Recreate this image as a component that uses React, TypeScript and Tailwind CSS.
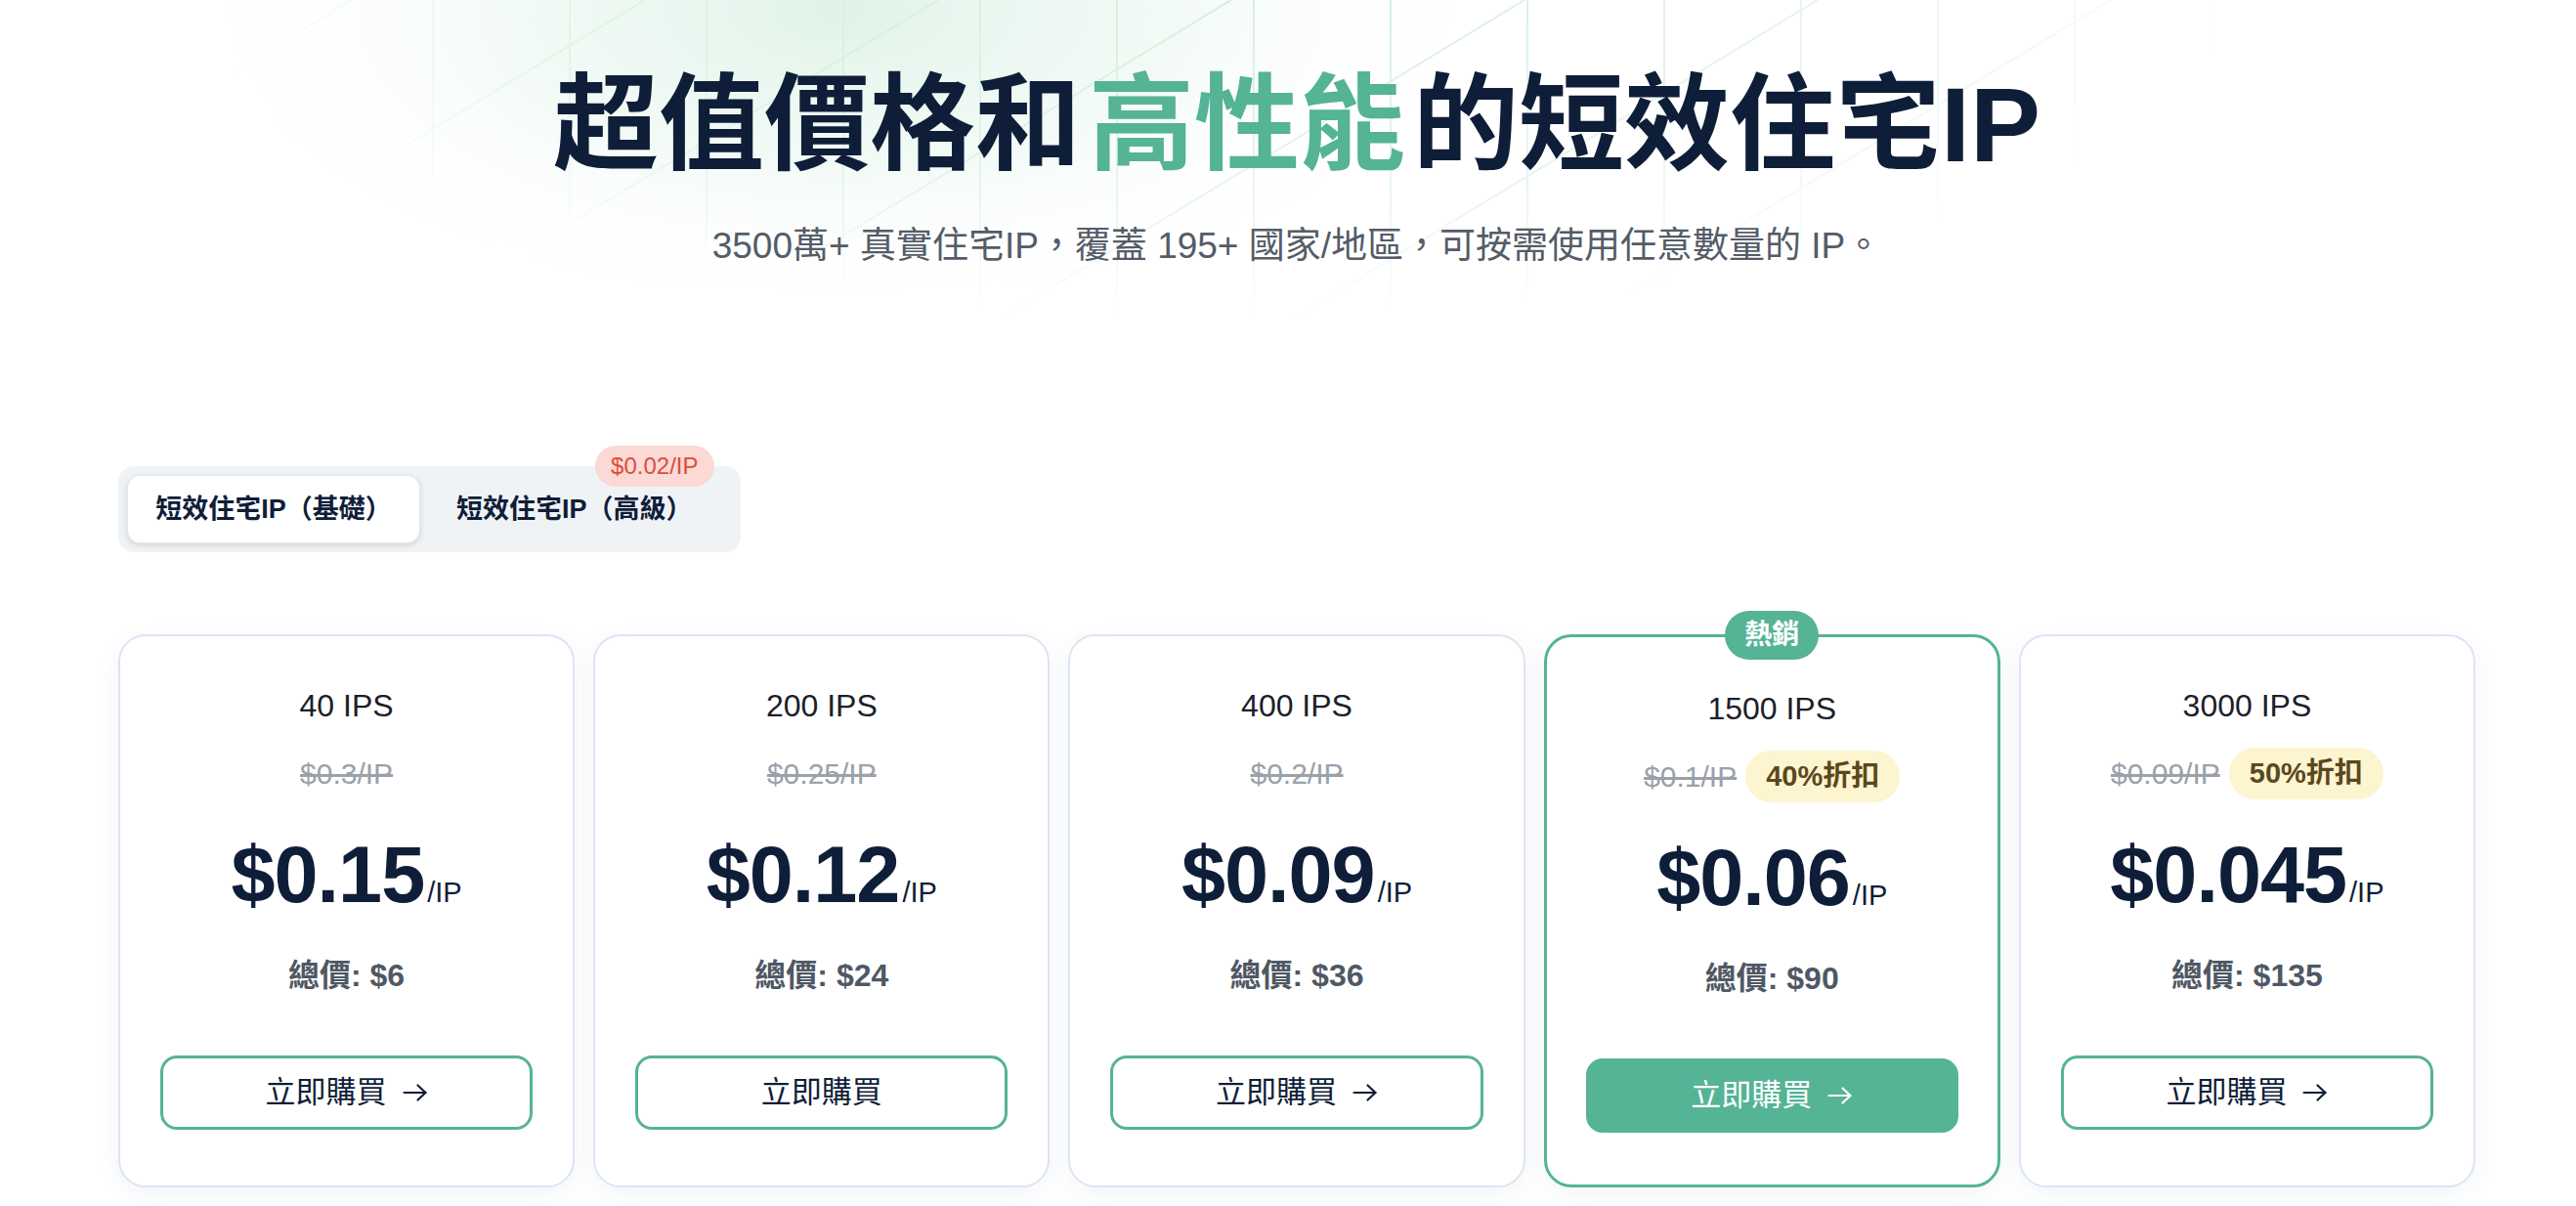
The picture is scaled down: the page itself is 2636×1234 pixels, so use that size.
import React from "react";

// 方案資料
const plans = [
  { ips: "40 IPS", old: "$0.3/IP", price: "$0.15", total: "總價: $6", arrow: true },
  { ips: "200 IPS", old: "$0.25/IP", price: "$0.12", total: "總價: $24", arrow: false },
  { ips: "400 IPS", old: "$0.2/IP", price: "$0.09", total: "總價: $36", arrow: true },
  { ips: "1500 IPS", old: "$0.1/IP", discount: "40%折扣", price: "$0.06", total: "總價: $90", arrow: true, hot: true },
  { ips: "3000 IPS", old: "$0.09/IP", discount: "50%折扣", price: "$0.045", total: "總價: $135", arrow: true },
];

type Plan = (typeof plans)[number] & { discount?: string; hot?: boolean };

function HeroGrid() {
  const verticals = Array.from({ length: 14 }, (_, i) => 443 + i * 140);
  const diagonals = Array.from({ length: 9 }, (_, i) => -200 + i * 300);
  return (
    <svg className="absolute left-0 top-0 pointer-events-none" width="2636" height="380">
      <defs>
        <radialGradient
          id="glow"
          cx="0"
          cy="0"
          r="1"
          gradientUnits="userSpaceOnUse"
          gradientTransform="translate(860 10) scale(640 300)"
        >
          <stop offset="0" stopColor="#dcf2e6" stopOpacity="0.9" />
          <stop offset="0.55" stopColor="#eaf7f0" stopOpacity="0.55" />
          <stop offset="1" stopColor="#ffffff" stopOpacity="0" />
        </radialGradient>
        <radialGradient
          id="fade"
          cx="0"
          cy="0"
          r="1"
          gradientUnits="userSpaceOnUse"
          gradientTransform="translate(1250 0) scale(1050 330)"
        >
          <stop offset="0" stopColor="#fff" stopOpacity="1" />
          <stop offset="0.65" stopColor="#fff" stopOpacity="0.5" />
          <stop offset="1" stopColor="#fff" stopOpacity="0" />
        </radialGradient>
        <mask id="gridMask">
          <rect x="0" y="0" width="2636" height="380" fill="url(#fade)" />
        </mask>
      </defs>
      <rect x="0" y="0" width="2636" height="380" fill="url(#glow)" />
      <g mask="url(#gridMask)" stroke="#d3efe0" strokeWidth="2" fill="none">
        {verticals.map((x) => (
          <line key={x} x1={x} y1={0} x2={x} y2={340} />
        ))}
        {diagonals.map((x) => (
          <line key={"d" + x} x1={x} y1={340} x2={x + 560} y2={0} />
        ))}
      </g>
    </svg>
  );
}

function Arrow({ color }: { color: string }) {
  return (
    <svg width="26" height="20" viewBox="0 0 26 20" fill="none" stroke={color} strokeWidth="2.2" strokeLinecap="round" strokeLinejoin="round">
      <path d="M1.5 10h22" />
      <path d="M15.5 2.5 23.5 10l-8 7.5" />
    </svg>
  );
}

function PlanCard({ plan }: { plan: Plan }) {
  const hot = !!plan.hot;
  return (
    <div
      className={
        hot
          ? "relative flex-1 flex flex-col items-center bg-white rounded-[28px] border-[3px] border-[#55b396] pt-[53px] pb-[53px] px-[40px] shadow-[0_6px_24px_rgba(30,60,120,0.06)]"
          : "relative flex-1 flex flex-col items-center bg-white rounded-[28px] border-2 border-[#dde4f3] pt-[51px] pb-[53px] px-[41px] shadow-[0_6px_24px_rgba(30,60,120,0.06)]"
      }
    >
      {hot && (
        <div className="absolute left-1/2 -translate-x-1/2 -top-[27px] h-[50px] px-[20px] rounded-full bg-[#55b396] text-white text-[28px] font-bold leading-[50px]">
          熱銷
        </div>
      )}

      {/* 數量 */}
      <div className="text-[32px] leading-[40px] text-[#1c2029]">{plan.ips}</div>

      {/* 原價 + 折扣 */}
      <div className="mt-[22px] h-[54px] flex items-center gap-[9px]">
        <span className="text-[30px] text-[#9aa1ab] line-through">{plan.old}</span>
        {plan.discount && (
          <span className="h-[53px] px-[21px] rounded-full bg-[#fdf4d0] text-[#5a481c] text-[29px] font-bold leading-[53px]">
            {plan.discount}
          </span>
        )}
      </div>

      {/* 價格 */}
      <div className="mt-[29px] h-[96px] flex items-baseline">
        <span className="text-[81px] leading-[96px] font-bold text-[#0f1e38] tracking-[-1px]">{plan.price}</span>
        <span className="ml-[3px] text-[29px] text-[#0f1e38]">/IP</span>
      </div>

      {/* 總價 */}
      <div className="mt-[35px] text-[32px] leading-[40px] font-bold text-[#4f5864]">{plan.total}</div>

      {/* 按鈕 */}
      <button
        type="button"
        className={
          hot
            ? "mt-[62px] w-full h-[76px] rounded-[17px] bg-[#55b396] text-white text-[31px] flex items-center justify-center gap-[16px]"
            : "mt-[62px] w-full h-[76px] rounded-[17px] border-[3px] border-[#55b396] bg-white text-[#0f1e38] text-[31px] flex items-center justify-center gap-[16px]"
        }
      >
        <span>立即購買</span>
        {plan.arrow && <Arrow color={hot ? "#ffffff" : "#0f1e38"} />}
      </button>
    </div>
  );
}

export default function App() {
  return (
    <div
      className="relative w-full min-h-[1234px] bg-white overflow-hidden"
      style={{ fontFamily: '"Liberation Sans", "Noto Sans CJK TC", sans-serif' }}
    >
      <HeroGrid />

      <div className="relative ml-[121px] w-[2412px] pt-[68px]">
        {/* 標題 */}
        <h1 className="text-center text-[108px] leading-[120px] font-bold text-[#0f1e38]">
          超值價格和<span className="mx-[8px] text-[#55b396]">高性能</span>的短效住宅IP
        </h1>
        <p className="mt-[40px] text-center text-[37px] leading-[48px] text-[#545c67]">
          3500萬+ 真實住宅IP，覆蓋 195+ 國家/地區，可按需使用任意數量的 IP。
        </p>

        {/* 分頁 */}
        <div className="mt-[201px] w-[637px] h-[88px] p-[9px] flex items-stretch rounded-[16px] bg-[#f0f3f6]">
          <div className="w-[300px] flex items-center justify-center rounded-[13px] bg-white border border-[#e3e6ea] shadow-[0_2px_6px_rgba(0,0,0,0.12)] text-[27px] font-semibold text-[#0f1e38]">
            短效住宅IP（基礎）
          </div>
          <div className="relative pl-[37px] flex items-center text-[27px] font-semibold text-[#0f1e38]">
            短效住宅IP（高級）
            <span className="absolute -top-[30px] right-[-22px] h-[42px] px-[16px] rounded-full bg-[#fbd9d5] text-[#e04c39] text-[24px] font-normal leading-[42px]">
              $0.02/IP
            </span>
          </div>
        </div>

        {/* 方案卡片 */}
        <div className="mt-[84px] flex gap-[19px]">
          {plans.map((p) => (
            <PlanCard key={p.ips} plan={p as Plan} />
          ))}
        </div>
      </div>
    </div>
  );
}
